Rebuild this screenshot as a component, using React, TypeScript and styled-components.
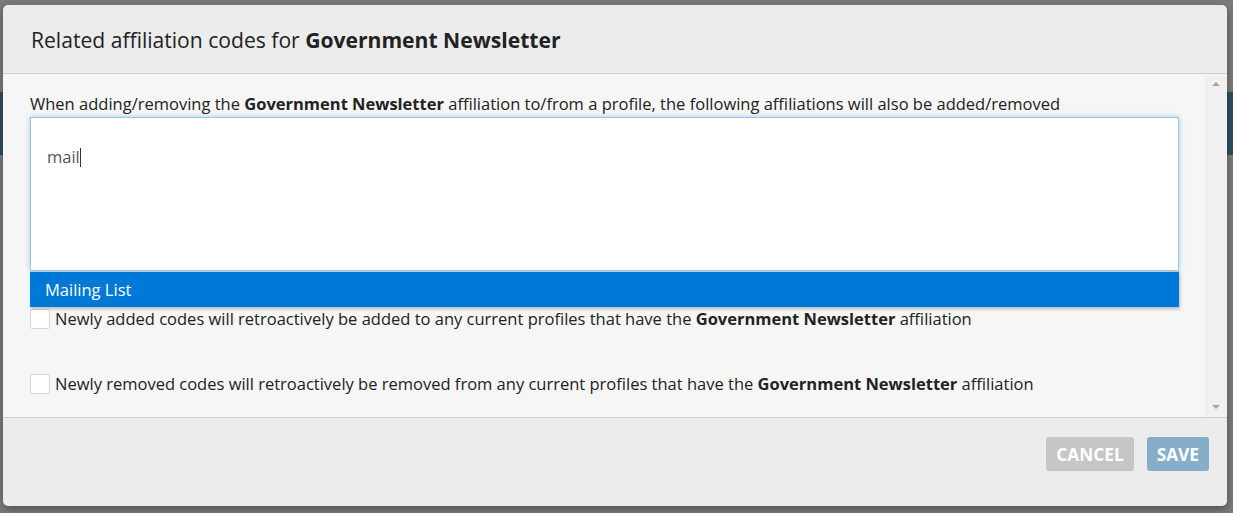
import styled, { createGlobalStyle } from "styled-components";

const Global = createGlobalStyle`
  html, body {
    margin: 0;
    padding: 0;
  }
  body {
    font-family: "Open Sans", "Noto Sans", sans-serif;
    color: #222;
  }
`;

const Page = styled.div`
  position: relative;
  width: 1233px;
  height: 513px;
  background: #7b7b7b;
  overflow: hidden;
  display: flex;
  flex-direction: column;
`;

const PageTop = styled.div`
  height: 92px;
`;

const PageBand = styled.div`
  height: 63px;
  background: #2e4f5e;
`;

const Modal = styled.div`
  position: absolute;
  left: 3px;
  top: 5px;
  width: 1224px;
  height: 501px;
  border-radius: 5px;
  background: #ececec;
  box-shadow: 0 3px 9px rgba(0, 0, 0, 0.35);
  display: flex;
  flex-direction: column;
  overflow: hidden;
`;

const Header = styled.div`
  height: 69px;
  box-sizing: border-box;
  border-bottom: 1px solid #cfcfcf;
  display: flex;
  align-items: center;
  padding: 0 28px;
  font-size: 21.1px;
  color: #222;
  b {
    font-weight: 700;
  }
`;

const Body = styled.div`
  height: 343px;
  display: flex;
  background: #f6f6f6;
  border-bottom: 1px solid #cfcfcf;
`;

const Content = styled.div`
  flex: 1;
  padding: 19px 26px 0 27px;
  font-size: 16.5px;
  color: #222;
  b {
    font-weight: 700;
  }
`;

const Intro = styled.div`
  line-height: 22px;
  margin-bottom: 2px;
  white-space: nowrap;
`;

const Field = styled.div`
  position: relative;
  margin-bottom: 38px;
`;

const TextBox = styled.div`
  height: 154px;
  box-sizing: border-box;
  background: #fff;
  border: 1px solid #9cc8e6;
  box-shadow: 0 0 5px rgba(102, 175, 233, 0.6);
  padding: 27px 16px;
  font-size: 16.5px;
  color: #555;
`;

const Caret = styled.span`
  display: inline-block;
  width: 1px;
  height: 19px;
  background: #333;
  vertical-align: -4px;
`;

const Menu = styled.div`
  position: absolute;
  left: 0;
  right: 0;
  top: 154px;
  background: #fff;
  border-top: 1px solid #c8c8c8;
  box-shadow: 1px 2px 3px rgba(0, 0, 0, 0.25);
`;

const Option = styled.div<{ $active?: boolean }>`
  height: 35px;
  display: flex;
  align-items: center;
  padding: 0 15px;
  background: ${(p) => (p.$active ? "#0078d7" : "#fff")};
  color: ${(p) => (p.$active ? "#fff" : "#222")};
  font-size: 16.5px;
`;

const CheckRow = styled.label<{ $gap?: number }>`
  display: flex;
  align-items: center;
  gap: 5px;
  margin-bottom: ${(p) => p.$gap ?? 0}px;
  line-height: 20px;
  white-space: nowrap;
`;

const Box = styled.span`
  width: 18px;
  height: 18px;
  flex: none;
  background: #fff;
  border: 1px solid #d6d6d6;
  border-radius: 2px;
`;

const Scrollbar = styled.div`
  width: 22px;
  background: #f0f0f0;
  display: flex;
  flex-direction: column;
  justify-content: space-between;
  align-items: center;
  padding: 8px 0;
`;

const Arrow = styled.span<{ $down?: boolean }>`
  width: 0;
  height: 0;
  border-left: 4px solid transparent;
  border-right: 4px solid transparent;
  ${(p) =>
    p.$down
      ? "border-top: 4px solid #a3a3a3;"
      : "border-bottom: 4px solid #a3a3a3;"}
`;

const Footer = styled.div`
  flex: 1;
  display: flex;
  justify-content: flex-end;
  align-items: flex-start;
  gap: 13px;
  padding: 19px 18px 0 0;
`;

const Button = styled.button<{ $primary?: boolean }>`
  height: 34px;
  border: none;
  border-radius: 3px;
  padding: 0 10px;
  font-family: "Open Sans", "Noto Sans", sans-serif;
  font-weight: 700;
  font-size: 17.3px;
  color: #fff;
  background: ${(p) => (p.$primary ? "#87aec8" : "#c6c6c6")};
`;

export default function App() {
  return (
    <>
      <Global />
      <Page>
        <PageTop />
        <PageBand />
        <Modal>
          <Header>
            Related affiliation codes for&nbsp;<b>Government Newsletter</b>
          </Header>
          <Body>
            <Content>
              <Intro>
                When adding/removing the <b>Government Newsletter</b>{" "}
                affiliation to/from a profile, the following affiliations will
                also be added/removed
              </Intro>
              <Field>
                <TextBox>
                  mail
                  <Caret />
                </TextBox>
                <Menu>
                  <Option $active>Mailing List</Option>
                </Menu>
              </Field>
              <CheckRow $gap={45}>
                <Box />
                <span>
                  Newly added codes will retroactively be added to any current
                  profiles that have the <b>Government Newsletter</b>{" "}
                  affiliation
                </span>
              </CheckRow>
              <CheckRow>
                <Box />
                <span>
                  Newly removed codes will retroactively be removed from any
                  current profiles that have the <b>Government Newsletter</b>{" "}
                  affiliation
                </span>
              </CheckRow>
            </Content>
            <Scrollbar>
              <Arrow />
              <Arrow $down />
            </Scrollbar>
          </Body>
          <Footer>
            <Button>CANCEL</Button>
            <Button $primary>SAVE</Button>
          </Footer>
        </Modal>
      </Page>
    </>
  );
}
